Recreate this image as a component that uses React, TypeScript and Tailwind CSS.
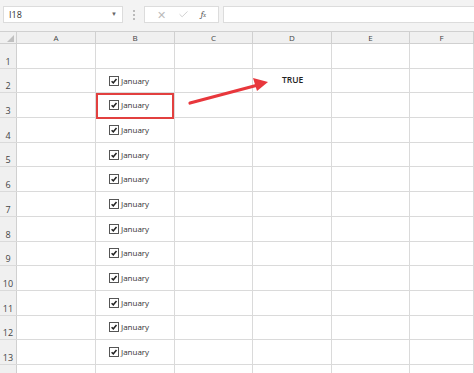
import { Check } from "lucide-react"

const cols = [
  { label: "A", w: "w-[79px]" },
  { label: "B", w: "w-[79px]" },
  { label: "C", w: "w-[78px]" },
  { label: "D", w: "w-[79px]" },
  { label: "E", w: "w-[78px]" },
  { label: "F", w: "flex-1" },
]

const rows = Array.from({ length: 14 }, (_, i) => i + 1)

function CheckBox() {
  return (
    <span className="w-[10px] h-[10px] border border-[#555] bg-white flex items-center justify-center">
      <svg width="8" height="8" viewBox="0 0 8 8">
        <path d="M1.6 4.2 L3.3 5.8 L6.5 2" fill="none" stroke="#222" strokeWidth="1.5" />
      </svg>
    </span>
  )
}

export default function App() {
  return (
    <div
      className="relative w-[474px] h-[373px] overflow-hidden bg-white"
      style={{ fontFamily: '"Open Sans", "Noto Sans", sans-serif' }}
    >
      {/* formula bar */}
      <div className="h-[31px] bg-[#f3f3f3] flex items-start pt-[6px] pl-[3px] gap-0">
        <div className="w-[120px] h-[17px] bg-white border border-[#dcdcdc] flex items-center justify-between px-[5px]">
          <span className="text-[9px] text-[#333]">I18</span>
          <span className="text-[6px] text-[#666]">▼</span>
        </div>
        <div className="w-[21px] h-[17px] flex items-center justify-center">
          <span className="flex flex-col gap-[2px]">
            <span className="w-[2px] h-[2px] bg-[#bbb]" />
            <span className="w-[2px] h-[2px] bg-[#bbb]" />
            <span className="w-[2px] h-[2px] bg-[#bbb]" />
          </span>
        </div>
        <div className="w-[75px] h-[17px] bg-white border border-[#dcdcdc] flex items-center justify-around px-[6px]">
          <span className="text-[11px] text-[#bbb] leading-none">✕</span>
          <Check size={11} className="text-[#bbb]" strokeWidth={1.5} />
          <span className="text-[9px] italic text-[#555] font-serif leading-none">
            f<span className="text-[6px]">x</span>
          </span>
        </div>
        <div className="ml-[4px] flex-1 h-[17px] bg-white border-y border-l border-[#dcdcdc]" />
      </div>

      {/* column headers */}
      <div className="flex h-[13px] bg-[#f0f0f0] border-y border-[#d0d0d0]">
        <div className="w-[17px] border-r border-[#d0d0d0] flex items-end justify-end pr-[2px] pb-[1px]">
          <svg width="7" height="7" viewBox="0 0 7 7">
            <path d="M7 0 L7 7 L0 7 Z" fill="#c0c0c0" />
          </svg>
        </div>
        {cols.map(c => (
          <div
            key={c.label}
            className={`${c.w} border-r border-[#d0d0d0] flex items-center justify-center text-[8px] text-[#444] leading-none`}
          >
            {c.label}
          </div>
        ))}
      </div>

      {/* rows */}
      {rows.map(r => (
        <div key={r} className="flex h-[24.7px] border-b border-[#dadada]">
          <div className="w-[17px] bg-[#f0f0f0] border-r border-[#d0d0d0] flex items-end justify-center pb-[2px] text-[9px] text-[#444] leading-none">
            {r <= 13 ? r : ""}
          </div>
          {cols.map(c => (
            <div key={c.label} className={`${c.w} border-r border-[#dadada] flex items-center`}>
              {c.label === "B" && r > 1 && r <= 13 && (
                <div className="flex items-center gap-[2px] pl-[13px]">
                  <CheckBox />
                  <span className="text-[8px] text-[#333]">January</span>
                </div>
              )}
              {c.label === "D" && r === 2 && (
                <span className="pl-[29px] text-[8.5px] font-semibold text-[#222] pb-[1px]">TRUE</span>
              )}
            </div>
          ))}
        </div>
      ))}

      {/* highlight box */}
      <div className="absolute left-[96px] top-[93px] w-[78px] h-[26px] border-2 border-[#e2403f]" />

      {/* arrow */}
      <svg className="absolute left-0 top-0" width="474" height="373" viewBox="0 0 474 373">
        <line x1="190" y1="103" x2="258" y2="85" stroke="#e8373c" strokeWidth="3.2" strokeLinecap="round" />
        <path d="M268 82 L253 78 L257 91 Z" fill="#e8373c" />
      </svg>
    </div>
  )
}
